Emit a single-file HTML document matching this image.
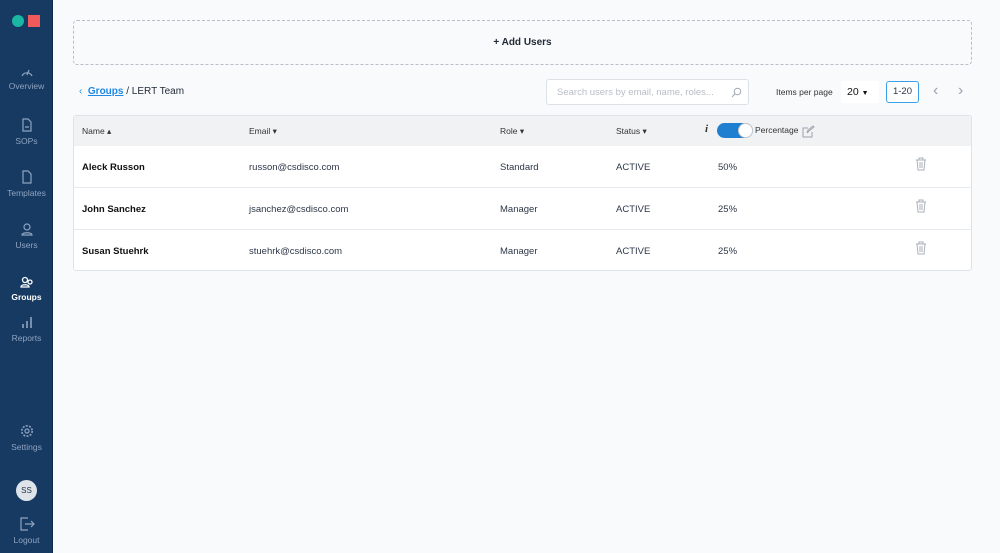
<!DOCTYPE html>
<html><head><style>
*{margin:0;padding:0;box-sizing:border-box}
body{width:1000px;height:553px;overflow:hidden;background:#f9fafb;font-family:"Liberation Sans",sans-serif;position:relative;color:#2d3748}
.sb{position:absolute;left:0;top:0;width:53px;height:553px;background:#173a63;border-right:1px solid #0f2a4a}
.logo1{position:absolute;left:12px;top:15px;width:12px;height:12px;border-radius:50%;background:#1ab8a4}
.logo2{position:absolute;left:28px;top:15px;width:12px;height:12px;background:#f05a5a}
.nav{position:absolute;left:0;width:53px;text-align:center;font-size:8.5px;color:#8fa3bf}
.nav svg{display:block;margin:0 auto 4px}
.nav.act{color:#fff;font-weight:bold}
.add{position:absolute;left:73px;top:20px;width:899px;height:45px;border:1px dashed #b8bec7;border-radius:4px;text-align:center;line-height:43px;font-size:10px;font-weight:bold;color:#1f2937}
.bc{position:absolute;left:79px;top:86px;font-size:10px;color:#1f2937}
.bc a{color:#1e88e5;text-decoration:underline;font-weight:bold}
.search{position:absolute;left:546px;top:79px;width:203px;height:26px;background:#fff;border:1px solid #dde1e6;border-radius:3px;font-size:9.5px;color:#b7bdc6;padding:7px 10px}
.ipp{position:absolute;left:776px;top:87px;font-size:8.5px;color:#333}
.sel{position:absolute;left:841px;top:81px;width:38px;height:22px;background:#fff;font-size:10.5px;padding:5px 6px;color:#111}
.pg{position:absolute;left:886px;top:81px;width:33px;height:22px;border:1.5px solid #3ba0e6;border-radius:3px;background:#fff;font-size:9.5px;text-align:center;line-height:19px}
.arr{position:absolute;top:82px;font-size:16px;color:#9aa3ad}
.tbl{position:absolute;left:73px;top:115px;width:899px;height:156px;background:#fff;border:1px solid #dfe3e8;border-radius:3px}
.th{position:absolute;top:0;left:0;width:897px;height:30px;background:#f1f2f4}
.c{position:absolute;font-size:9.5px}
.h{top:10px;font-size:8.5px;color:#333}
.row{position:absolute;left:0;width:897px;height:42px;border-bottom:1px solid #e6e9ed}
.tr{position:absolute;left:841px;top:11px}
</style></head><body>
<div class="sb">
<div class="logo1"></div><div class="logo2"></div>
<div class="nav" style="top:67px"><svg width="14" height="10" viewBox="0 0 14 10"><path d="M2 9A5.5 5.5 0 0 1 12 9M7 8L9 3" stroke="#8fa3bf" fill="none" stroke-width="1.2"/></svg>Overview</div>
<div class="nav" style="top:118px"><svg width="10" height="14" viewBox="0 0 10 14"><path d="M1 1h5l3 3v9H1z M3 9h4" stroke="#8fa3bf" fill="none" stroke-width="1.2"/></svg>SOPs</div>
<div class="nav" style="top:170px"><svg width="10" height="14" viewBox="0 0 10 14"><path d="M1 1h5l3 3v9H1z" stroke="#8fa3bf" fill="none" stroke-width="1.2"/></svg>Templates</div>
<div class="nav" style="top:222px"><svg width="12" height="14" viewBox="0 0 12 14"><circle cx="6" cy="5" r="3" stroke="#8fa3bf" fill="none" stroke-width="1.2"/><path d="M1 13c0-3 10-3 10 0z" stroke="#8fa3bf" fill="none" stroke-width="1.2"/></svg>Users</div>
<div class="nav act" style="top:276px"><svg width="14" height="12" viewBox="0 0 14 12"><circle cx="5" cy="4" r="2.5" stroke="#fff" fill="none" stroke-width="1.3"/><circle cx="10" cy="6" r="2" stroke="#fff" fill="none" stroke-width="1.3"/><path d="M1 11c0-3 8-3 8 0z" stroke="#fff" fill="none" stroke-width="1.3"/></svg>Groups</div>
<div class="nav" style="top:316px"><svg width="12" height="13" viewBox="0 0 12 13"><path d="M2 12V8M6 12V5M10 12V1" stroke="#8fa3bf" stroke-width="1.6"/></svg>Reports</div>
<div class="nav" style="top:424px"><svg width="14" height="14" viewBox="0 0 14 14"><circle cx="7" cy="7" r="2" stroke="#8fa3bf" fill="none" stroke-width="1.2"/><circle cx="7" cy="7" r="5.2" stroke="#8fa3bf" fill="none" stroke-width="1.6" stroke-dasharray="2 1.3"/></svg>Settings</div>
<div style="position:absolute;left:16px;top:480px;width:21px;height:21px;border-radius:50%;background:#dfe3ea;color:#1f2d3d;font-size:8px;text-align:center;line-height:21px">SS</div>
<div class="nav" style="top:517px"><svg width="16" height="14" viewBox="0 0 16 14"><path d="M9 1H2v12h7M6 7h9M12 4l3 3-3 3" stroke="#8fa3bf" fill="none" stroke-width="1.2"/></svg>Logout</div>
</div>
<div class="add">+ Add Users</div>
<div class="bc"><span style="color:#1e88e5">&lsaquo;</span>&nbsp; <a>Groups</a> / LERT Team</div>
<div class="search">Search users by email, name, roles...<svg style="position:absolute;right:6px;top:7px" width="11" height="11" viewBox="0 0 11 11"><circle cx="6.5" cy="4.5" r="3.3" stroke="#a0a8b2" fill="none"/><path d="M4 7L1 10" stroke="#a0a8b2"/></svg></div>
<div class="ipp">Items per page</div>
<div class="sel">20 <span style="font-size:7px">&#9660;</span></div>
<div class="pg">1-20</div>
<div class="arr" style="left:933px">&lsaquo;</div><div class="arr" style="left:958px">&rsaquo;</div>
<div class="tbl">
<div class="th">
<div class="c h" style="left:8px">Name &#9652;</div>
<div class="c h" style="left:175px">Email &#9662;</div>
<div class="c h" style="left:426px">Role &#9662;</div>
<div class="c h" style="left:542px">Status &#9662;</div>
<div class="c h" style="left:631px;top:7px;font-family:'Liberation Serif';font-style:italic;font-weight:bold;font-size:11px">i</div>
<div style="position:absolute;left:643px;top:7px;width:36px;height:15px;border-radius:8px;background:#1e7fd1"><div style="position:absolute;right:0;top:0;width:15px;height:15px;border-radius:50%;background:#fff;border:1px solid #ccc"></div></div>
<div class="c h" style="left:681px;top:9px">Percentage</div>
<svg style="position:absolute;left:728px;top:9px" width="13" height="13" viewBox="0 0 13 13"><path d="M10 7v5H1V3h5M5 8l1-3 5-4 1 1-5 4z" stroke="#9aa3ad" fill="none"/></svg>
</div>
<div class="row" style="top:30px"><div class="c" style="left:8px;top:16px;font-weight:bold;color:#111">Aleck Russon</div><div class="c" style="left:175px;top:16px">russon@csdisco.com</div><div class="c" style="left:426px;top:16px">Standard</div><div class="c" style="left:542px;top:16px">ACTIVE</div><div class="c" style="left:644px;top:16px">50%</div><svg class="tr" width="12" height="14" viewBox="0 0 12 14"><path d="M1 3h10M4 3V1h4v2M2 3l1 10h6l1-10M5 5v6M7 5v6" stroke="#aab1ba" fill="none"/></svg></div>
<div class="row" style="top:72px"><div class="c" style="left:8px;top:16px;font-weight:bold;color:#111">John Sanchez</div><div class="c" style="left:175px;top:16px">jsanchez@csdisco.com</div><div class="c" style="left:426px;top:16px">Manager</div><div class="c" style="left:542px;top:16px">ACTIVE</div><div class="c" style="left:644px;top:16px">25%</div><svg class="tr" width="12" height="14" viewBox="0 0 12 14"><path d="M1 3h10M4 3V1h4v2M2 3l1 10h6l1-10M5 5v6M7 5v6" stroke="#aab1ba" fill="none"/></svg></div>
<div class="row" style="top:114px;border:none"><div class="c" style="left:8px;top:16px;font-weight:bold;color:#111">Susan Stuehrk</div><div class="c" style="left:175px;top:16px">stuehrk@csdisco.com</div><div class="c" style="left:426px;top:16px">Manager</div><div class="c" style="left:542px;top:16px">ACTIVE</div><div class="c" style="left:644px;top:16px">25%</div><svg class="tr" width="12" height="14" viewBox="0 0 12 14"><path d="M1 3h10M4 3V1h4v2M2 3l1 10h6l1-10M5 5v6M7 5v6" stroke="#aab1ba" fill="none"/></svg></div>
</div>
</body></html>
